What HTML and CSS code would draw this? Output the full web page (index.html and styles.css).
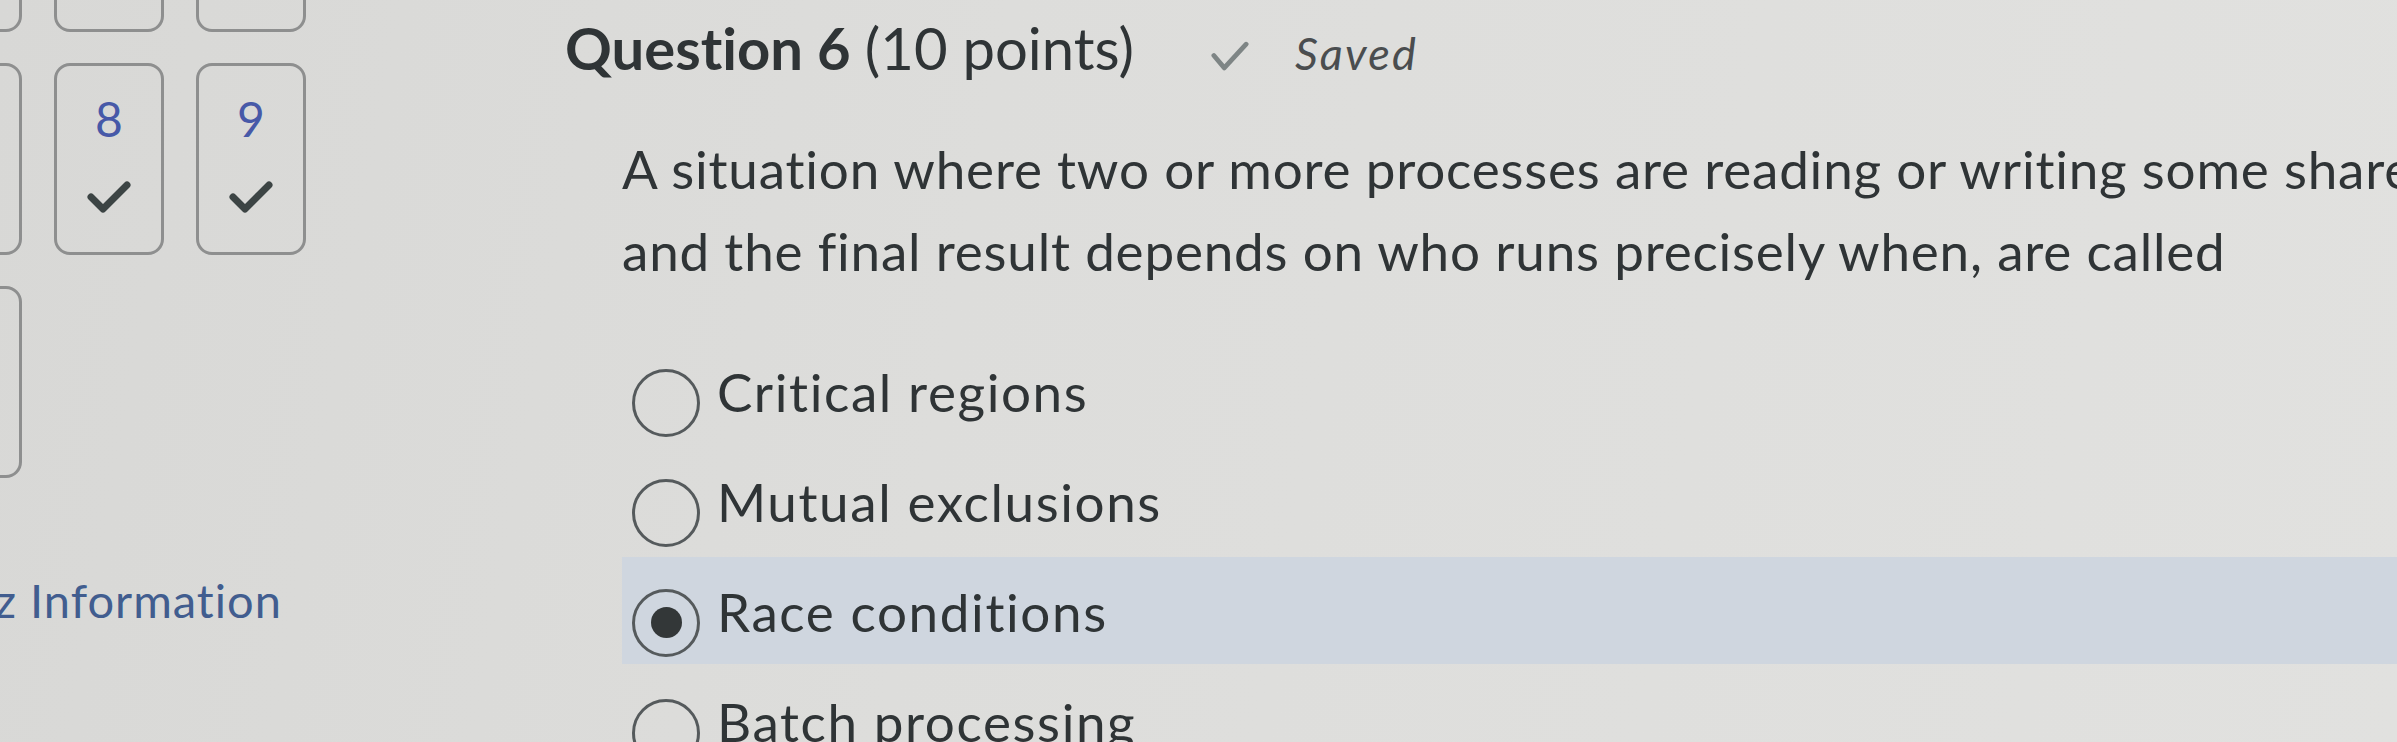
FILE: index.html
```html
<!DOCTYPE html>
<html lang="en">
<head>
<meta charset="utf-8">
<title>Question 6</title>
<link rel="stylesheet" href="styles.css">
</head>
<body>
<div class="page">
  <aside class="sidebar">
    <div class="tiles">
      <div class="tile"></div>
      <div class="tile"></div>
      <div class="tile"></div>
      <div class="tile">
        <span class="tile-num">7</span>
        <svg class="tile-check" viewBox="0 0 44 32" aria-hidden="true"><path d="M4 16 L16 28 L40 4"/></svg>
      </div>
      <div class="tile">
        <span class="tile-num">8</span>
        <svg class="tile-check" viewBox="0 0 44 32" aria-hidden="true"><path d="M4 16 L16 28 L40 4"/></svg>
      </div>
      <div class="tile">
        <span class="tile-num">9</span>
        <svg class="tile-check" viewBox="0 0 44 32" aria-hidden="true"><path d="M4 16 L16 28 L40 4"/></svg>
      </div>
      <div class="tile"></div>
    </div>
    <div class="quiz-info">Quiz Information</div>
  </aside>
  <main class="main">
    <header class="q-head">
      <h2 class="q-title"><span class="q-name">Question 6</span> <span class="q-points">(10 points)</span></h2>
      <span class="saved">
        <svg class="saved-check" viewBox="0 0 40 32" aria-hidden="true"><path d="M3 15 L14 28 L37 3"/></svg>
        <span class="saved-text">Saved</span>
      </span>
    </header>
    <div class="q-body">
      <p class="q-text"><span class="q-line">A situation where two or more processes are reading or writing some shared data</span><br><span class="q-line">and the final result depends on who runs precisely when, are called</span></p>
      <div class="answers">
        <label class="answer"><span class="radio"></span><span class="answer-text">Critical regions</span></label>
        <label class="answer"><span class="radio"></span><span class="answer-text">Mutual exclusions</span></label>
        <label class="answer answer-selected"><span class="radio radio-on"></span><span class="answer-text">Race conditions</span></label>
        <label class="answer"><span class="radio"></span><span class="answer-text">Batch processing</span></label>
      </div>
    </div>
  </main>
</div>
</body>
</html>
```
FILE: styles.css
```css
html, body {
  margin: 0;
  padding: 0;
}
body {
  width: 2397px;
  height: 742px;
  overflow: hidden;
  background: linear-gradient(100deg, #d8d8d6 0%, #dddddb 40%, #e1e1df 100%);
  font-family: Lato, "Open Sans", sans-serif;
  font-variant-ligatures: none;
  font-feature-settings: "liga" 0, "clig" 0;
  color: #2f3436;
}
.page {
  display: flex;
  align-items: flex-start;
}
.sidebar {
  width: 565px;
  flex: none;
}
.tiles {
  display: grid;
  grid-template-columns: repeat(3, 110px);
  grid-auto-rows: 192px;
  gap: 31px 32px;
  margin-left: -88px;
  margin-top: -160px;
}
.tile {
  box-sizing: border-box;
  border: 3px solid #8e8f8f;
  border-radius: 16px;
  display: flex;
  flex-direction: column;
  align-items: center;
  padding-top: 24px;
}
.tile-num {
  font-size: 48px;
  line-height: 1.2;
  color: #4759a8;
}
.tile-check {
  width: 44px;
  height: 32px;
  margin-top: 33px;
  fill: none;
  stroke: #3c4444;
  stroke-width: 7;
  stroke-linecap: round;
  stroke-linejoin: round;
}
.quiz-info {
  margin-top: 96px;
  margin-left: -83px;
  font-size: 47px;
  letter-spacing: 1px;
  line-height: 53px;
  color: #415d8f;
  white-space: nowrap;
}
.main {
  flex: 1;
  min-width: 0;
  padding-top: 13px;
}
.q-head {
  display: flex;
  align-items: baseline;
}
.q-title {
  margin: 0;
  font-size: 58px;
  line-height: 1.2;
  font-weight: 700;
  white-space: nowrap;
}
.q-points {
  font-weight: 400;
}
.saved {
  display: flex;
  align-items: baseline;
  margin-left: 77px;
  color: #4a4d4f;
}
.saved-check {
  width: 38px;
  height: 31px;
  fill: none;
  stroke: #7e8585;
  stroke-width: 5;
  stroke-linecap: round;
  stroke-linejoin: round;
  align-self: center;
  margin-top: 6px;
}
.saved-text {
  margin-left: 46px;
  font-size: 45px;
  letter-spacing: 2.2px;
  font-style: italic;
  line-height: 1.2;
}
.q-body {
  padding-left: 57px;
}
.q-text {
  margin: 45px 0 0;
  font-size: 53px;
  letter-spacing: 0.8px;
  line-height: 82px;
  white-space: nowrap;
}
.answers {
  margin-top: 45px;
  display: flex;
  flex-direction: column;
  gap: 3px;
}
.answer {
  height: 107px;
  display: flex;
  align-items: flex-start;
  padding-left: 10px;
}
.answer-selected {
  background: #cfd6df;
}
.radio {
  box-sizing: border-box;
  width: 68px;
  height: 68px;
  margin-top: 32px;
  border: 3px solid #555a5c;
  border-radius: 50%;
  flex: none;
  display: flex;
  align-items: center;
  justify-content: center;
}
.radio-on::after {
  content: "";
  width: 31px;
  height: 31px;
  border-radius: 50%;
  background: #333738;
}
.answer-text {
  margin-left: 17px;
  padding-top: 25px;
  font-size: 53px;
  letter-spacing: 1.6px;
  line-height: 60px;
  white-space: nowrap;
}
```
